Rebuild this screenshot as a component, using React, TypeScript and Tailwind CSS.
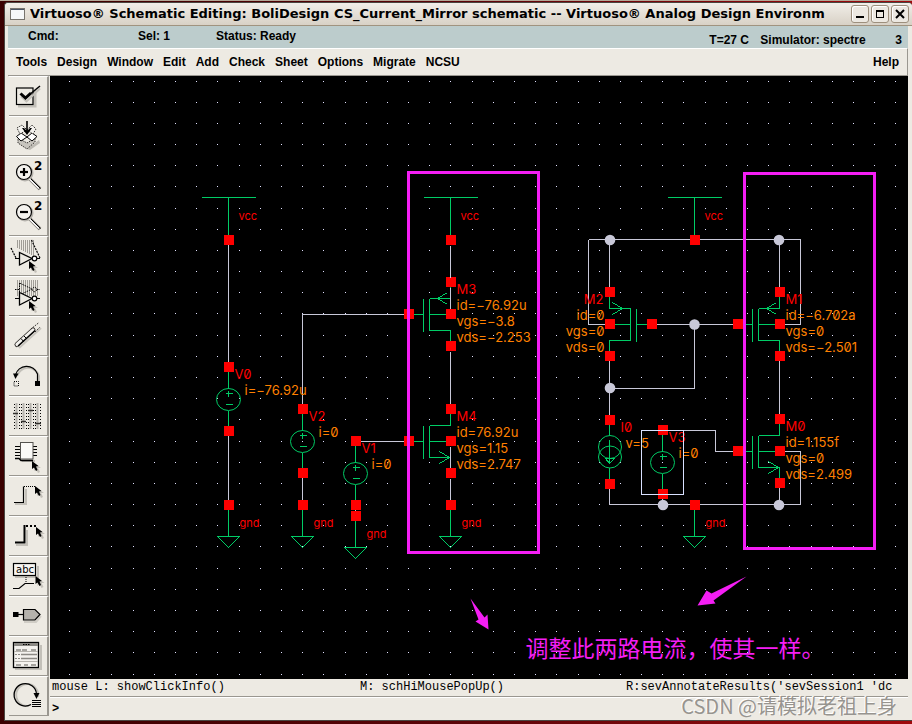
import type { ReactNode } from "react";

const WIRE = "#c8c8d8";
const GREEN = "#00cc66";
const RED = "#ff0000";
const ORANGE = "#ff8000";
const MARK = "#f41ef4";

/* ---------- toolbar icons ---------- */

function Cursor({ x, y }: { x: number; y: number }) {
  return (
    <g transform={`translate(${x} ${y})`}>
      <path d="M1 1 L1 9 L3 7 L5 11 L7 10 L5 6 L8 6 Z" fill="#c3c0b9" transform="translate(1 1)" />
      <path d="M0 0 L0 8 L2 6.500 L4 10 L5.500 9 L4 5.500 L6.500 5 Z" fill="#000" />
    </g>
  );
}

function Lens({ plus }: { plus: boolean }) {
  return (
    <>
      <circle cx="16" cy="17" r="7.500" fill="none" stroke="#b5b2ac" strokeWidth="2" />
      <circle cx="15" cy="16" r="7.500" fill="#f4f2ee" stroke="#000" strokeWidth="1.200" />
      <path d="M11 16H19" stroke="#000" strokeWidth="2.200" />
      {plus && <path d="M15 12V20" stroke="#000" strokeWidth="2.200" />}
      <path d="M21 23L31 33" stroke="#77746e" strokeWidth="3.500" />
      <path d="M20.500 23L30 32.500" stroke="#fff" strokeWidth="1.500" />
      <path d="M22 23L31.500 32.500" stroke="#000" strokeWidth="1" />
      <text x="25" y="14" fontSize="12" fontWeight="700" fontFamily="DejaVu Sans, sans-serif">2</text>
    </>
  );
}

function Inverter({ ghost }: { ghost: boolean }) {
  const lines = ghost ? [8, 10, 12, 14, 16, 18, 20, 22, 24, 26, 28] : [8, 10, 12, 14, 16, 18, 20, 22, 24];
  return (
    <>
      {lines.map((x) => (
        <path key={x} d={`M${x + 0.5} 4V${ghost ? 20 : 12 + (x - 8) * 0.5}`} stroke="#a09d97" strokeWidth="1" />
      ))}
      {ghost ? (
        <g fill="none" stroke="#000" strokeDasharray="1.500 1">
          <path d="M10.500 7V19L23 13Z M6 13.500H10M28 13.500H31" />
          <circle cx="25.500" cy="13.500" r="2.200" />
        </g>
      ) : (
        <path d="M2 12L7 22M22.500 4L31 22" stroke="#000" strokeWidth="1.200" strokeDasharray="2 1" fill="none" />
      )}
      <path d="M10.500 16.500V29L23 22.500Z" fill="#edeae3" stroke="#000" strokeWidth="1.300" />
      <path d="M6 22.500H10M28 22.500H31" stroke="#000" />
      <circle cx="25.500" cy="22.500" r="2.300" fill="#fff" stroke="#000" strokeWidth="1.200" />
      <Cursor x={20} y={25} />
    </>
  );
}

const tools: { name: string; icon: ReactNode }[] = [
  {
    name: "Check and save",
    icon: (
      <>
        <path d="M9 30H26V14" fill="none" stroke="#c3c0b9" strokeWidth="3" />
        <rect x="7.500" y="12" width="16.500" height="16.500" fill="#edeae3" stroke="#000" strokeWidth="1.200" />
        <path d="M12 20.500L17.500 25.500L31 12.500" fill="none" stroke="#c3c0b9" strokeWidth="2" />
        <path d="M11.500 17.500L16.500 22L22 17" fill="none" stroke="#000" strokeWidth="3" />
        <path d="M20 19L31 10" stroke="#000" strokeWidth="1.500" />
      </>
    ),
  },
  {
    name: "Save",
    icon: (
      <>
        <path d="M18 33L30 24L31 27L21 34Z" fill="#bdbab3" />
        <path d="M9 22L18 27L26 22V26L18 33L9 27Z" fill="#c8c5be" stroke="#33312e" strokeWidth="1" strokeDasharray="1.500 1" />
        <path d="M7.500 20.500L12 17L18 21L12 25Z M18 21L23 17L28 20.500L23 25Z" fill="#fff" stroke="#000" strokeWidth="1" />
        <path d="M8 12L13 9L18 14L11 18Z M18 14L23 9L27 13L24 18Z" fill="#f4f2ee" stroke="#33312e" strokeWidth="1" strokeDasharray="1.500 1" />
        <path d="M18 5V15" stroke="#000" strokeWidth="1.600" />
        <path d="M13 12H15L18 15L21 12H23L18 19Z" fill="#000" />
      </>
    ),
  },
  { name: "Zoom in by 2", icon: <Lens plus /> },
  { name: "Zoom out by 2", icon: <Lens plus={false} /> },
  { name: "Stretch", icon: <Inverter ghost={false} /> },
  { name: "Copy", icon: <Inverter ghost /> },
  {
    name: "Delete",
    icon: (
      <>
        <path d="M10 32L32 12" stroke="#c8c5be" strokeWidth="2" />
        <path d="M8 28.500L24 14" stroke="#33312e" strokeWidth="5" strokeLinecap="round" />
        <path d="M8 28.500L24 14" stroke="#f4f2ee" strokeWidth="3.200" strokeLinecap="round" />
        <path d="M22 13L30 6.500M26 16L31 11" stroke="#33312e" strokeDasharray="1.500 1" />
        <path d="M9 30L26 14.500" stroke="#000" strokeWidth="1.300" />
        <path d="M12 22.500L15 26M15 20L18 23" stroke="#000" strokeWidth="1" />
      </>
    ),
  },
  {
    name: "Undo",
    icon: (
      <>
        <path d="M8 20A11.500 11.500 0 0 1 30 20V26" fill="none" stroke="#c3c0b9" strokeWidth="2" />
        <path d="M6.500 19A11.500 11.500 0 0 1 28.500 18V26" fill="none" stroke="#000" strokeWidth="1.200" />
        <path d="M4 17.500H9.500L6.500 23Z" fill="#000" />
        <rect x="5" y="25.500" width="4.500" height="4.500" fill="none" stroke="#000" strokeDasharray="1 1" />
        <rect x="26" y="25" width="5" height="5" fill="#000" />
      </>
    ),
  },
  {
    name: "Property",
    icon: (
      <>
        {[5, 12, 19, 26].map((x) => (
          <g key={x} strokeDasharray="1 2">
            <path d={`M${x + 0.5} 8V33M${x + 5.500} 8V33`} stroke="#000" />
            <path d={`M${x + 2.500} 7V33`} stroke="#b5b2ac" strokeWidth="2" strokeDasharray="none" />
          </g>
        ))}
        <path d="M4 17.500H9M12 25.500H17M19 14.500H24M26 27.500H32" stroke="#33312e" strokeWidth="1.500" />
      </>
    ),
  },
  {
    name: "Component",
    icon: (
      <>
        <path d="M6 10.500H28M6 13.500H28M6 16.500H28M6 19.500H28" stroke="#000" strokeWidth="1.200" />
        <path d="M13 25H26" fill="none" stroke="#bdbab3" strokeWidth="2" />
        <rect x="11.500" y="6.500" width="12.500" height="16.500" fill="#fbfaf7" stroke="#55534f" />
        <path d="M6 22.500H10L12 24.500H24" fill="none" stroke="#000" strokeWidth="1.500" />
        <Cursor x={23} y={25} />
      </>
    ),
  },
  {
    name: "Wire narrow",
    icon: (
      <>
        <path d="M6 28H17V13" fill="none" stroke="#c3c0b9" strokeWidth="2" />
        <path d="M5 26.500H14.500V10.500" fill="none" stroke="#000" strokeWidth="1.200" />
        <path d="M15 10.500H26" stroke="#000" strokeDasharray="1 1" />
        <Cursor x={26} y={10} />
      </>
    ),
  },
  {
    name: "Wire wide",
    icon: (
      <>
        <path d="M7 29H18V14" fill="none" stroke="#c3c0b9" strokeWidth="2" />
        <path d="M6 26.500H15.500V9" fill="none" stroke="#000" strokeWidth="2" />
        <path d="M17 10H27" stroke="#000" strokeWidth="2" strokeDasharray="2 2" />
        <Cursor x={27} y={11} />
      </>
    ),
  },
  {
    name: "Wire name",
    icon: (
      <>
        <path d="M6 21H29V10" fill="none" stroke="#c3c0b9" strokeWidth="2" />
        <rect x="4.500" y="7.500" width="22" height="12" fill="#f7f5f1" stroke="#000" strokeWidth="1.200" />
        <text x="7" y="17" fontSize="10" fontFamily="DejaVu Sans, sans-serif">abc</text>
        <path d="M17 21V27" stroke="#000" strokeDasharray="1 1" />
        <path d="M4 32.500H10L16 27.500H25" fill="none" stroke="#000" strokeWidth="1.200" />
        <Cursor x={26.5} y={20} />
      </>
    ),
  },
  {
    name: "Pin",
    icon: (
      <>
        <path d="M15 26H27L32 20" fill="none" stroke="#d0cdc6" strokeWidth="2" />
        <rect x="4" y="16" width="5.500" height="5" fill="#000" />
        <path d="M9 18.500H15" stroke="#000" strokeWidth="1.200" />
        <path d="M14.500 13.500H26L31 18.500L26 24H14.500Z" fill="#b5b2ac" stroke="#000" strokeWidth="1.200" />
      </>
    ),
  },
  {
    name: "Command options",
    icon: (
      <>
        <path d="M6 33H32V9" fill="none" stroke="#c3c0b9" strokeWidth="2" />
        <rect x="4.500" y="6.500" width="25" height="25" fill="#f4f2ee" stroke="#000" strokeWidth="1.300" />
        <rect x="5" y="7" width="24" height="3" fill="#8b8984" />
        <path d="M14 8.500H21" stroke="#000" strokeDasharray="1.500 1" />
        <path d="M7 14H12M13 14H18M22 14H27M12 18.500H28M12 22.500H28M7 29H12M15 29H19M22 29H27" stroke="#8b8984" strokeWidth="1.500" />
        <path d="M6 18.500H11M6 22.500H11" stroke="#8b8984" strokeDasharray="2 1" />
        <path d="M5 15.500H29M5 25.500H29" stroke="#b5b2ac" />
      </>
    ),
  },
  {
    name: "Repeat",
    icon: (
      <>
        <path d="M19.500 30A11 11 0 1 1 29 21" fill="none" stroke="#c3c0b9" strokeWidth="2" />
        <path d="M22 28.500A11.200 11.200 0 1 1 27.500 18" fill="none" stroke="#000" strokeWidth="1.300" />
        <path d="M24.500 17H30.500L27.500 23Z" fill="#000" />
        <path d="M23 24.500H32M23 26.500H32M23 28.500H32M23 30.500H32" stroke="#000" strokeWidth="1.200" />
      </>
    ),
  },
];

/* ---------- schematic primitives ---------- */

/* A line's integer coordinates are pixel centres. */
function Net({ d, color = WIRE }: { d: string; color?: string }) {
  return <path d={d} fill="none" stroke={color} strokeWidth="1" shapeRendering="crispEdges" />;
}

function Pin({ x, y }: { x: number; y: number }) {
  return <rect x={x - 4.5} y={y - 5.5} width="10" height="10" fill={RED} />;
}

function Node({ x, y }: { x: number; y: number }) {
  return <circle cx={x} cy={y} r="5.300" fill={WIRE} />;
}

function Label({ x, y, children, size = 13, color = RED, end = false }: { x: number; y: number; children: string; size?: number; color?: string; end?: boolean }) {
  return (
    <text x={x} y={y} fill={color} fontSize={size} textAnchor={end ? "end" : "start"}>
      {children}
    </text>
  );
}

function Vcc({ x }: { x: number }) {
  return (
    <>
      <Net color={GREEN} d={`M${x - 27} 197H${x + 27}M${x} 197V236`} />
      <Label x={x + 10} y={219} size={11}>vcc</Label>
      <Pin x={x} y={240} />
    </>
  );
}

function Gnd({ x, y }: { x: number; y: number }) {
  return (
    <>
      <Net color={GREEN} d={`M${x} ${y}V${y + 31}M${x - 11} ${y + 31}H${x + 11}L${x} ${y + 42}Z`} />
      <Pin x={x} y={y} />
      <Label x={x + 11} y={y + 21} size={11}>gnd</Label>
    </>
  );
}

function Source({ x, y, name, value }: { x: number; y: number; name: string; value: string }) {
  return (
    <>
      <Net color={GREEN} d={`M${x} ${y}V${y + 21}M${x} ${y + 43}V${y + 64}M${x} ${y + 23}V${y + 29}M${x - 3} ${y + 26}H${x + 4}M${x - 3} ${y + 37}H${x + 4}`} />
      <ellipse cx={x} cy={y + 32} rx="12" ry="11" fill="none" stroke={GREEN} />
      <Pin x={x} y={y} />
      <Pin x={x} y={y + 64} />
      <Label x={x + 6} y={y + 11}>{name}</Label>
      <Label x={x + 16} y={y + 27} color={ORANGE}>{value}</Label>
    </>
  );
}

/* x, y: the bulk pin; the gate lies to the left unless flipped. */
function Mos({ x, y, p = false, flip = false, name, values }: { x: number; y: number; p?: boolean; flip?: boolean; name: string; values: string[] }) {
  const s = flip ? -1 : 1;
  return (
    <>
      <Net color={GREEN} d={`M${x} ${y - 32}V${y - 16}H${x - 21 * s}M${x - 21 * s} ${y - 16}V${y + 16}H${x}V${y + 32}M${x - 21 * s} ${y}H${x}M${x - 27 * s} ${y - 16}V${y + 17}M${x - 27 * s} ${y}H${x - 42 * s}`} />
      {p ? (
        <Net color={GREEN} d={`M${x - 3 * s} ${y - 22}L${x - 13 * s} ${y - 16}L${x - 3 * s} ${y - 10}`} />
      ) : (
        <Net color={GREEN} d={`M${x - 11 * s} ${y + 10}L${x - 1 * s} ${y + 16}L${x - 11 * s} ${y + 22}`} />
      )}
      <Pin x={x} y={y} />
      <Pin x={x - 42 * s} y={y} />
      <Pin x={x} y={y - 32} />
      <Pin x={x} y={y + 32} />
      <Label x={flip ? x - 6 : x + 6} y={y - 21} end={flip}>{name}</Label>
      {values.map((v, i) => (
        <Label key={v} x={flip ? x - 5 : x + 6} y={y - 5 + i * 16} color={ORANGE} end={flip}>{v}</Label>
      ))}
    </>
  );
}

const columns = Array.from({ length: 90 }, (_, i) => Math.floor(69.6 + i * 21.185));
const rows = Array.from({ length: 50 }, (_, i) => Math.floor(81 + i * 21.18));
const dots = rows.map((y) => columns.map((x) => `M${x - 0.5} ${y}h1`).join("")).join("");

function Schematic() {
  return (
    <svg className="block min-h-0 w-full flex-1 bg-black font-['Inter',sans-serif] font-normal slashed-zero" role="img" aria-label="CS_Current_Mirror schematic">
      <g transform="translate(-49.5 -75.5)">
        <Net color="#e0e0ff" d={dots} />

        {/* bias branches */}
        <Net d="M228 240V367M228 431V505M404 314H302V409M302 473V505M355 441H408M355 505V515" />
        <Vcc x={228} />
        <Source x={228} y={367} name="V0" value="i=−76.92u" />
        <Gnd x={228} y={505} />
        <Source x={302} y={409} name="V2" value="i=0" />
        <Gnd x={302} y={505} />
        <Source x={355} y={441} name="V1" value="i=0" />
        <Gnd x={355} y={516} />

        {/* left amplifier */}
        <Vcc x={450} />
        <Mos x={450} y={314} p name="M3" values={["id=−76.92u", "vgs=−3.8", "vds=−2.253"]} />
        <Mos x={450} y={441} name="M4" values={["id=76.92u", "vgs=1.15", "vds=2.747"]} />
        <Net d="M450 245V277M450 287V308M450 351V403M450 446V467M450 478V499" />
        <Gnd x={450} y={505} />

        {/* current mirror */}
        <Net d="M588 239H800V324H784M588 239V324H604M609 240V293M779 240V293M652 324H737M694 324V388H609M609 356V420M779 356V420M609 483V504H800V451H784M779 483V505M662 493V505M662 430H715V451H733" />
        <Vcc x={694} />
        <Mos x={609} y={324} p flip name="M2" values={["id=0", "vgs=0", "vds=0"]} />
        <Mos x={779} y={324} p name="M1" values={["id=−6.702a", "vgs=0", "vds=−2.501"]} />
        <Mos x={779} y={451} name="M0" values={["id=1.155f", "vgs=0", "vds=2.499"]} />
        <Gnd x={694} y={505} />
        <Node x={609.5} y={239.5} />
        <Node x={778.5} y={239.5} />
        <Node x={694} y={324} />
        <Node x={609.5} y={387.5} />
        <Node x={778.5} y={504.5} />

        {/* current source I0 */}
        <Net color={GREEN} d="M609 420V435M609 467V483M609 439V463M605 458H614L609 463Z" />
        <ellipse cx="609.500" cy="446.500" rx="11.500" ry="11.500" fill="none" stroke={GREEN} />
        <ellipse cx="609.500" cy="456.500" rx="11.500" ry="11" fill="none" stroke={GREEN} />
        <Pin x={609} y={420} />
        <Pin x={609} y={484} />
        <Label x={620} y={431}>I0</Label>
        <Label x={625} y={447} color={ORANGE}>v=5</Label>

        {/* selected source V3 */}
        <Source x={662} y={430} name="V3" value="i=0" />
        <Node x={662.5} y={504.5} />
        <Net color="#d8e0ff" d="M641 430H683V494H641Z" />

        {/* annotations */}
        <g fill="none" stroke={MARK} strokeWidth="3">
          <rect x="408" y="172" width="130" height="380" />
          <rect x="744" y="173" width="130" height="375" />
        </g>
        <path d="M470 598L484 617L487 614L488 629L475 621L478 619Z" fill={MARK} />
        <path d="M746 576L713 600L715 603L697 605L706 590L711 593Z" fill={MARK} />
        <text x="525" y="656" fill={MARK} fontSize="23" className="font-['Noto_Sans_CJK_SC',sans-serif] font-normal">
          调整此两路电流，使其一样。
        </text>
      </g>
    </svg>
  );
}

/* ---------- window ---------- */

const menus = ["Tools", "Design", "Window", "Edit", "Add", "Check", "Sheet", "Options", "Migrate", "NCSU"];

function TitleButton({ label, children }: { label: string; children: ReactNode }) {
  return (
    <button aria-label={label} className="flex size-[18px] shrink-0 items-center justify-center rounded-[3px] border border-[#9c8f7d] bg-[#ece8e1] shadow-[inset_1px_1px_0_#fff]">
      <svg width="10" height="10" viewBox="0 0 10 10" fill="none" stroke="#000" shapeRendering="crispEdges">
        {children}
      </svg>
    </button>
  );
}

export default function App() {
  return (
    <div className="flex min-h-screen flex-col border-t border-[#b3a797] bg-gradient-to-r from-[#3a0000] via-[#5c0408] to-[#a00a0c] pt-px pb-[3px] pl-1 font-['Liberation_Sans',sans-serif] text-xs text-black">
      <div className="relative flex flex-1 flex-col rounded-t-[4px] border-t border-b border-l border-[#4a4641] bg-[#edeae3]">
        <header className="flex h-[23px] items-center gap-[5px] rounded-t-[4px] border-b border-[#a0937f] bg-gradient-to-b from-[#f1eee8] to-[#d8d1c6] pr-[3px] pl-[5px]">
          <svg width="15" height="12" viewBox="0 0 15 12" className="shrink-0">
            <rect x="0.500" y="0.500" width="14" height="11" fill="#f6f8fa" stroke="#77746e" />
            <path d="M1 1.500H14" stroke="#4a5566" />
          </svg>
          <h1 className="min-w-0 flex-1 overflow-hidden font-['DejaVu_Sans',sans-serif] text-[13px] leading-5 font-bold whitespace-nowrap">
            Virtuoso® Schematic Editing: BoliDesign CS_Current_Mirror schematic -- Virtuoso® Analog Design Environm
          </h1>
          <div className="flex gap-0.5">
            <TitleButton label="Minimize"><path d="M1 8H9" strokeWidth="2" /></TitleButton>
            <TitleButton label="Maximize"><path d="M1.500 1V9M8.500 1V9M1 8.500H9" /><path d="M1 2H9" strokeWidth="2" /></TitleButton>
            <TitleButton label="Close"><path d="M1 1L9 9M9 1L1 9" strokeWidth="2" shapeRendering="auto" /></TitleButton>
          </div>
        </header>

        <div className="mr-1 ml-[3px] flex flex-1 flex-col">
          <div className="flex h-[22px] bg-[#bccccc] pr-1.5 pl-5 font-bold">
            <span className="w-[110px] leading-5">Cmd:</span>
            <span className="w-[78px] leading-5">Sel: 1</span>
            <span className="flex-1 leading-5">Status: Ready</span>
            <span className="w-[51px] pt-1 leading-5">T=27 C</span>
            <span className="w-[135px] pt-1 leading-5">Simulator: spectre</span>
            <span className="pt-1 leading-5">3</span>
          </div>

          <nav className="flex h-7 items-center gap-2.5 border-t border-r border-b border-t-white border-r-[#9a9790] border-b-[#9a9790] pr-2 pl-2 font-bold">
            {menus.map((m) => (
              <button key={m}>{m}</button>
            ))}
            <button className="ml-auto">Help</button>
          </nav>

          <div className="flex flex-1">
            <div className="flex w-[42px] shrink-0 flex-col pl-px">
              {tools.map((t) => (
                <button key={t.name} aria-label={t.name} className="h-10 w-10 border-t border-r-2 border-b border-t-white border-r-[#9a9790] border-b-[#9a9790]">
                  <svg width="38" height="38" viewBox="0 1 38 38">{t.icon}</svg>
                </button>
              ))}
            </div>

            <div className="flex min-w-0 flex-1 flex-col">
              <Schematic />
              <div className="flex h-[18px] border-b border-[#9a9790] pl-0.5 font-['Liberation_Mono',monospace] leading-4 whitespace-pre">
                <span className="w-[308px]">mouse L: showClickInfo()</span>
                <span className="flex-1">M: schHiMousePopUp()</span>
                <span className="w-[282px]">R:sevAnnotateResults('sevSession1 'dc</span>
              </div>
              <div className="flex h-[23px] items-center border-t border-white pl-0.5 font-['Liberation_Mono',monospace]">
                <label htmlFor="prompt" className="font-bold">&gt;</label>
                <input id="prompt" className="min-w-0 flex-1 bg-transparent outline-none" />
              </div>
            </div>
          </div>
        </div>

        <div className="pointer-events-none absolute right-[15px] bottom-0 font-['Noto_Sans_CJK_SC',sans-serif] text-[20px] leading-7 text-[#97948f] [text-shadow:-1px_-1px_0_#fff]">
          CSDN @请模拟老祖上身
        </div>
      </div>
    </div>
  );
}
